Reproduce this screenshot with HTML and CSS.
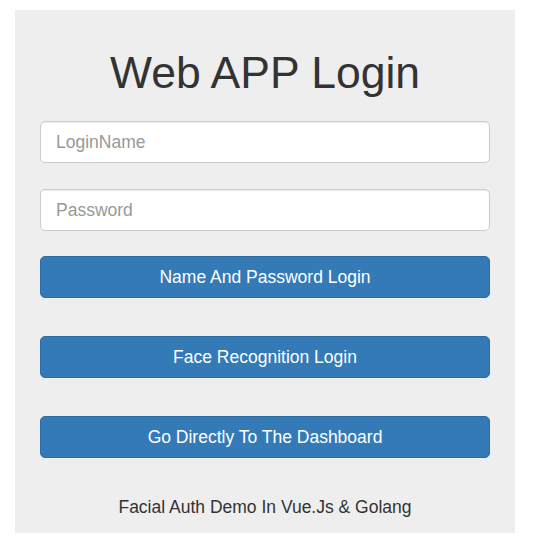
FILE: index.html
```html
<!DOCTYPE html>
<html lang="en">
<head>
<meta charset="utf-8">
<title>Web APP Login</title>
<link rel="stylesheet" href="styles.css">
</head>
<body>
<div class="panel">
  <h1 class="title">Web APP Login</h1>
  <form class="login-form">
    <input class="field" type="text" placeholder="LoginName">
    <input class="field field-second" type="password" placeholder="Password">
    <button class="btn btn-first" type="button">Name And Password Login</button>
    <button class="btn btn-spaced" type="button">Face Recognition Login</button>
    <button class="btn btn-spaced" type="button">Go Directly To The Dashboard</button>
  </form>
  <p class="footer">Facial Auth Demo In Vue.Js &amp; Golang</p>
</div>
</body>
</html>
```

FILE: styles.css
```css
html, body {
  margin: 0;
  padding: 0;
  background: #ffffff;
}

body {
  font-family: "Liberation Sans", Arial, Helvetica, sans-serif;
  color: #333333;
}

.panel {
  box-sizing: border-box;
  width: 500px;
  margin: 10px 0 0 15px;
  padding: 37.6px 25px 12.6px;
  background: #eeeeee;
  display: flex;
  flex-direction: column;
}

.title {
  margin: 0;
  font-size: 44.5px;
  font-weight: 400;
  line-height: 49px;
  text-align: center;
  color: #333333;
}

.login-form {
  display: flex;
  flex-direction: column;
  margin-top: 24.4px;
}

.field {
  box-sizing: border-box;
  height: 42.5px;
  width: 100%;
  padding: 0 15px;
  font-family: inherit;
  font-size: 17.5px;
  color: #555555;
  background: #ffffff;
  border: 1px solid #cccccc;
  border-radius: 5px;
  box-shadow: inset 0 1px 1px rgba(0, 0, 0, 0.075);
  outline: none;
}

.field::placeholder {
  color: #999999;
}

.field-second {
  margin-top: 25.5px;
}

.btn {
  box-sizing: border-box;
  height: 42.5px;
  width: 100%;
  padding: 0 15px;
  font-family: inherit;
  font-size: 17.5px;
  color: #ffffff;
  background: #337ab7;
  border: 1px solid #2e6da4;
  border-radius: 5px;
  cursor: pointer;
}

.btn-first {
  margin-top: 24.5px;
}

.btn-spaced {
  margin-top: 37.5px;
}

.footer {
  margin: 37px 0 0;
  font-size: 17.5px;
  line-height: 25px;
  text-align: center;
  color: #333333;
}
```
